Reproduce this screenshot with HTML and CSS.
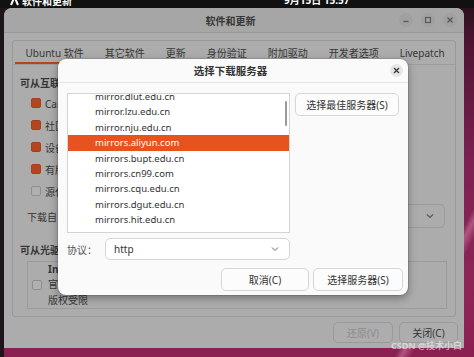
FILE: index.html
```html
<!DOCTYPE html>
<html lang="zh-CN">
<head>
    <meta charset="UTF-8">
    <title>软件和更新</title>
    <link rel="stylesheet" href="styles.css">
</head>
<body>
    <div class="topbar">
        <div class="app-name">
            <svg width="9" height="10" viewBox="0 0 9 10"><path d="M1 9 L4.5 1 L8 9" fill="none" stroke="#fff" stroke-width="2"/></svg>
            <span>软件和更新</span>
        </div>
        <div class="clock">9月15日 15:57</div>
    </div>

    <div class="main-window">
        <div class="titlebar">
            <span></span>
            <span class="title">软件和更新</span>
            <div class="win-controls">
                <span class="win-btn"><svg width="8" height="8" viewBox="0 0 8 8"><path d="M1.5 5.5 H6.5" stroke="#555" stroke-width="1.2"/></svg></span>
                <span class="win-btn"><svg width="8" height="8" viewBox="0 0 8 8"><rect x="1.5" y="1.5" width="5" height="5" fill="none" stroke="#555" stroke-width="1.1"/></svg></span>
                <span class="win-btn"><svg width="8" height="8" viewBox="0 0 8 8"><path d="M1.5 1.5 L6.5 6.5 M6.5 1.5 L1.5 6.5" stroke="#555" stroke-width="1.2"/></svg></span>
            </div>
        </div>
        <div class="win-body">
            <div class="notebook">
                <div class="tabs">
                    <span class="tab active">Ubuntu 软件</span>
                    <span class="tab">其它软件</span>
                    <span class="tab">更新</span>
                    <span class="tab">身份验证</span>
                    <span class="tab">附加驱动</span>
                    <span class="tab">开发者选项</span>
                    <span class="tab">Livepatch</span>
                </div>
                <div class="page">
                    <div class="section-title">可从互联网下载</div>
                    <div class="check-row"><span class="check on"></span>Canonical 支持的免费和开源软件</div>
                    <div class="check-row"><span class="check on"></span>社区维护的免费和开源软件</div>
                    <div class="check-row"><span class="check on"></span>设备的专有驱动</div>
                    <div class="check-row"><span class="check on"></span>有版权和合法性问题的软件</div>
                    <div class="check-row"><span class="check"></span>源代码</div>
                    <div class="source-row">
                        <span>下载自：</span>
                        <div class="combo dim">
                            <span>中国的服务器</span>
                            <svg width="8" height="6" viewBox="0 0 8 6"><path d="M1 1.5 L4 4.5 L7 1.5" fill="none" stroke="#555" stroke-width="1.1"/></svg>
                        </div>
                    </div>
                    <div class="section-title second">可从光驱安装</div>
                    <div class="cd-box">
                        <span class="check"></span>
                        <div class="cd-text">
                            <b>Installable CD</b>
                            <span>官方支持</span>
                            <span>版权受限</span>
                        </div>
                    </div>
                </div>
            </div>
            <div class="win-actions">
                <span class="btn disabled">还原(V)</span>
                <span class="btn">关闭(C)</span>
            </div>
        </div>
    </div>

    <div class="dialog">
        <div class="dialog-header">
            <span></span>
            <span class="dialog-title">选择下载服务器</span>
            <span class="dialog-close"><svg width="7" height="7" viewBox="0 0 7 7"><path d="M1 1 L6 6 M6 1 L1 6" stroke="#333" stroke-width="1.2"/></svg></span>
        </div>
        <div class="dialog-body">
            <div class="server-grid">
                <div class="server-list">
                    <div class="rows">
                        <div class="row">mirror.dlut.edu.cn</div>
                        <div class="row">mirror.lzu.edu.cn</div>
                        <div class="row">mirror.nju.edu.cn</div>
                        <div class="row selected">mirrors.aliyun.com</div>
                        <div class="row">mirrors.bupt.edu.cn</div>
                        <div class="row">mirrors.cn99.com</div>
                        <div class="row">mirrors.cqu.edu.cn</div>
                        <div class="row">mirrors.dgut.edu.cn</div>
                        <div class="row">mirrors.hit.edu.cn</div>
                        <div class="row">mirrors.huaweicloud.com</div>
                    </div>
                    <span class="scrollbar"></span>
                </div>
                <span class="btn light best">选择最佳服务器(S)</span>
            </div>
            <div class="protocol-row">
                <span>协议：</span>
                <div class="combo">
                    <span>http</span>
                    <svg width="8" height="6" viewBox="0 0 8 6"><path d="M1 1.5 L4 4.5 L7 1.5" fill="none" stroke="#666" stroke-width="1"/></svg>
                </div>
            </div>
            <div class="dialog-actions">
                <span class="btn light cancel">取消(C)</span>
                <span class="btn light choose">选择服务器(S)</span>
            </div>
        </div>
    </div>

    <div class="watermark">CSDN @技术小白</div>
</body>
</html>
```

FILE: styles.css
```css
* {
    box-sizing: border-box;
}
body {
    margin: 0;
    width: 474px;
    height: 357px;
    overflow: hidden;
    position: relative;
    font-family: "Noto Sans", "Noto Sans CJK SC", sans-serif;
    font-size: 10px;
    color: #333;
    background:
        linear-gradient(90deg, #1c1519 0 4px, transparent 4px),
        linear-gradient(118deg, transparent 88%, rgba(255, 180, 215, 0.35) 89%, transparent 90.5%),
        linear-gradient(180deg, #241018 0%, #4e1532 12%, #7c2152 45%, #8d2657 80%, #8a2051 100%);
}

/* top panel, cut at the top of the shot */
.topbar {
    height: 8px;
    background: #111;
    color: #fff;
    display: flex;
    overflow: hidden;
    font-weight: 700;
    line-height: 12px;
}
.app-name {
    display: flex;
    align-items: center;
    gap: 3px;
    margin: -6px 0 0 10px;
}
.clock {
    margin: -6px 0 0 212px;
}

/* main window (dimmed behind the modal) */
.main-window {
    position: absolute;
    left: 4px;
    top: 8px;
    width: 460px;
    height: 340px;
    background: #acacac;
    border-radius: 8px 8px 0 0;
    display: flex;
    flex-direction: column;
    color: #363636;
}
.titlebar {
    height: 25px;
    background: #a6a6a6;
    border-bottom: 1px solid #999;
    border-radius: 8px 8px 0 0;
    display: grid;
    grid-template-columns: 1fr auto 1fr;
    align-items: center;
    padding-right: 7px;
}
.title {
    font-weight: 700;
}
.win-controls {
    justify-self: end;
    display: flex;
    gap: 8px;
}
.win-btn {
    width: 14px;
    height: 14px;
    border-radius: 50%;
    background: #a0a0a0;
    display: flex;
    align-items: center;
    justify-content: center;
}
.win-body {
    flex: 1;
    display: flex;
    flex-direction: column;
    padding: 7px 6px 0 8px;
}
.notebook {
    height: 277px;
    margin-right: 2px;
    border: 1px solid #999;
    border-radius: 3px;
    display: flex;
    flex-direction: column;
}
.tabs {
    height: 24px;
    display: flex;
    padding-left: 2px;
    border-bottom: 1px solid #9d9d9d;
}
.tab {
    flex: none;
    white-space: nowrap;
    padding: 0 10.5px;
    display: flex;
    align-items: center;
}
.tab.active {
    box-shadow: inset 0 -2px 0 #b4461f;
}
.page {
    flex: 1;
    padding: 11px 8px 0 7px;
}
.section-title {
    font-weight: 700;
    line-height: 14px;
    margin-bottom: 2px;
}
.section-title.second {
    margin: 15px 0 4px;
}
.check-row {
    height: 22px;
    display: flex;
    align-items: center;
    padding-left: 11px;
    gap: 4px;
    white-space: nowrap;
}
.check {
    width: 10px;
    height: 10px;
    border: 1px solid #8e8e8e;
    border-radius: 2px;
    background: #b0b0b0;
    flex: none;
}
.check.on {
    background: #b4461f;
    border-color: #a43f1c;
}
.source-row {
    height: 24px;
    margin-top: 2px;
    padding-left: 7px;
    display: flex;
    align-items: center;
    gap: 14px;
}
.combo {
    flex: 1;
    height: 100%;
    border: 1px solid #d6d6d6;
    border-radius: 5px;
    background: #fff;
    display: flex;
    align-items: center;
    justify-content: space-between;
    padding: 0 10px 0 8px;
}
.combo.dim {
    background: #acacac;
    border-color: #9b9b9b;
    margin-right: 2px;
}
.cd-box {
    height: 48px;
    margin: 0 0 0 7px;
    border: 1px solid #9b9b9b;
    display: flex;
    align-items: center;
    gap: 6px;
    padding-left: 4px;
}
.cd-text {
    display: flex;
    flex-direction: column;
    line-height: 15.5px;
}
.win-actions {
    display: flex;
    justify-content: flex-end;
    gap: 6px;
    margin-top: 5px;
}
.btn {
    height: 21px;
    border: 1px solid #9a9a9a;
    border-radius: 5px;
    display: flex;
    align-items: center;
    justify-content: center;
    background: #adadad;
    width: 59px;
}
.btn.disabled {
    color: #8c8c8c;
    width: 60px;
}

/* modal dialog */
.dialog {
    position: absolute;
    left: 58px;
    top: 59px;
    width: 350px;
    height: 236px;
    background: #fafafa;
    border-radius: 8px;
    box-shadow: 0 3px 9px rgba(0, 0, 0, 0.35), 0 0 0 1px rgba(0, 0, 0, 0.1);
    display: flex;
    flex-direction: column;
}
.dialog-header {
    height: 24px;
    display: grid;
    grid-template-columns: 1fr auto 1fr;
    align-items: center;
    border-bottom: 1px solid #e4e4e4;
    padding-right: 5px;
}
.dialog-title {
    font-weight: 700;
    font-size: 10.5px;
}
.dialog-close {
    justify-self: end;
    width: 13px;
    height: 13px;
    border-radius: 50%;
    background: #e6e6e6;
    display: flex;
    align-items: center;
    justify-content: center;
}
.dialog-body {
    flex: 1;
    padding: 10px 5px 4px 9px;
    display: flex;
    flex-direction: column;
}
.server-grid {
    display: grid;
    grid-template-columns: 223px 104px;
    gap: 5px;
    align-items: start;
}
.server-list {
    height: 140px;
    border: 1px solid #d4d4d4;
    background: #fff;
    overflow: hidden;
    position: relative;
}
.rows {
    margin-top: -5px;
}
.row {
    height: 15.4px;
    line-height: 15.4px;
    padding-left: 27px;
    font-size: 9.5px;
    color: #333;
}
.row.selected {
    background: #e6531f;
    color: #fff;
}
.scrollbar {
    position: absolute;
    right: 2px;
    top: 7px;
    width: 2px;
    height: 25px;
    border-radius: 1px;
    background: #9a9a9a;
}
.btn.light {
    background: #fcfcfc;
    border-color: #d6d6d6;
    color: #333;
    height: 23px;
    width: auto;
}
.protocol-row {
    display: grid;
    grid-template-columns: 38px 185px;
    height: 22px;
    margin-top: 5px;
    align-items: center;
    color: #555;
}
.protocol-row .combo {
    color: #333;
}
.dialog-actions {
    display: flex;
    justify-content: flex-end;
    gap: 4px;
    margin-top: 8px;
}
.btn.light.cancel {
    width: 88px;
}
.btn.light.choose {
    width: 90px;
}

.watermark {
    position: absolute;
    right: 12px;
    bottom: 5px;
    color: rgba(255, 255, 255, 0.55);
    font-size: 9px;
    font-weight: 700;
}
```
